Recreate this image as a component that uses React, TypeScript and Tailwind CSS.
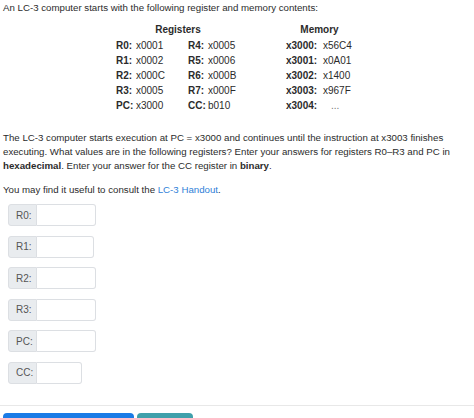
import React from 'react';

const REGS: [string, string, string, string][] = [
  ['R0:', 'x0001', 'R4:', 'x0005'],
  ['R1:', 'x0002', 'R5:', 'x0006'],
  ['R2:', 'x000C', 'R6:', 'x000B'],
  ['R3:', 'x0005', 'R7:', 'x000F'],
  ['PC:', 'x3000', 'CC:', 'b010'],
];

const MEM: [string, string][] = [
  ['x3000:', 'x56C4'],
  ['x3001:', 'x0A01'],
  ['x3002:', 'x1400'],
  ['x3003:', 'x967F'],
  ['x3004:', '...'],
];

const INPUTS: { label: string; w: string }[] = [
  { label: 'R0:', w: 'w-[59px]' },
  { label: 'R1:', w: 'w-[57px]' },
  { label: 'R2:', w: 'w-[59px]' },
  { label: 'R3:', w: 'w-[59px]' },
  { label: 'PC:', w: 'w-[59px]' },
  { label: 'CC:', w: 'w-[45px]' },
];

export default function App() {
  return (
    <div
      className="w-[474px] h-[418px] overflow-hidden bg-white text-[#2b2b2b] text-[10px]"
      style={{ fontFamily: '"Liberation Sans", Arial, sans-serif' }}
    >
      <div className="px-[3px] pt-[1px]">
        <p className="leading-[14px] text-[9.7px]">
          An LC-3 computer starts with the following register and memory contents:
        </p>

        {/* Registers / Memory */}
        <div className="flex gap-[46px] mt-[7px] pl-[113px]">
          <div>
            <div className="text-center font-bold leading-[15px]">Registers</div>
            <div className="grid grid-cols-[20px_52px_20px_32px] leading-[15px] mt-[1px]">
              {REGS.map((r) => (
                <React.Fragment key={r[0]}>
                  <span className="font-bold">{r[0]}</span>
                  <span>{r[1]}</span>
                  <span className="font-bold">{r[2]}</span>
                  <span>{r[3]}</span>
                </React.Fragment>
              ))}
            </div>
          </div>
          <div>
            <div className="text-center font-bold leading-[15px]">Memory</div>
            <div className="grid grid-cols-[37px_30px] leading-[15px] mt-[1px]">
              {MEM.map((m) => (
                <React.Fragment key={m[0]}>
                  <span className="font-bold">{m[0]}</span>
                  <span className={m[1] === '...' ? 'pl-[8px] text-[#777]' : ''}>{m[1]}</span>
                </React.Fragment>
              ))}
            </div>
          </div>
        </div>

        <p className="mt-[18px] leading-[14px] text-[9.7px]">
          The LC-3 computer starts execution at PC = x3000 and continues until the instruction at x3003 finishes
          executing. What values are in the following registers? Enter your answers for registers R0–R3 and PC in{' '}
          <b>hexadecimal</b>. Enter your answer for the CC register in <b>binary</b>.
        </p>
        <p className="mt-[10px] leading-[14px] text-[9.7px]">
          You may find it useful to consult the <a className="text-[#2f7fd8]">LC-3 Handout</a>.
        </p>
      </div>

      {/* Answer inputs */}
      <div className="flex flex-col gap-[9.6px] pl-[8px] mt-[7px]">
        {INPUTS.map((i) => (
          <div key={i.label} className="flex h-[22px]">
            <span className="flex items-center w-[29px] pl-[7px] bg-[#e9ecef] border border-[#dcdfe3] rounded-l-[3px] text-[#555]">
              {i.label}
            </span>
            <input className={`${i.w} border border-l-0 border-[#dcdfe3] rounded-r-[3px] outline-none`} />
          </div>
        ))}
      </div>

      <div className="mt-[21px] border-t border-[#e8e8e8]" />
      <div className="flex gap-[3px] pl-[3px] mt-[7px]">
        <button className="w-[131px] h-[24px] bg-[#1a7be6] rounded-[4px]" />
        <button className="w-[56px] h-[24px] bg-[#3fa0ab] rounded-[4px]" />
      </div>
    </div>
  );
}
